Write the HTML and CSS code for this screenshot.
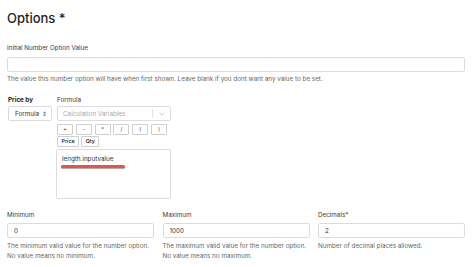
FILE: index.html
```html
<!DOCTYPE html>
<html lang="en">
<head>
    <meta charset="UTF-8">
    <meta name="viewport" content="width=device-width, initial-scale=1.0">
    <title>Options</title>
    <link rel="stylesheet" href="styles.css">
</head>
<body>
    <h2 class="title">Options *</h2>

    <div class="field">
        <label class="label">Initial Number Option Value</label>
        <input class="input" type="text" value="">
        <div class="help">The value this number option will have when first shown. Leave blank if you dont want any value to be set.</div>
    </div>

    <div class="price-row">
        <div class="price-by">
            <label class="label bold">Price by</label>
            <div class="select small">
                <span>Formula</span>
                <span class="updown">&#8661;</span>
            </div>
        </div>
        <div class="formula">
            <label class="label">Formula</label>
            <div class="select wide">
                <span class="placeholder">Calculation Variables</span>
                <span class="sep"></span>
                <svg class="chevron" viewBox="0 0 10 6" width="6" height="4">
                    <path d="M1 1l4 4 4-4" fill="none" stroke="#bbb" stroke-width="1.3"/>
                </svg>
            </div>
            <div class="ops">
                <button class="btn op">+</button>
                <button class="btn op">-</button>
                <button class="btn op">*</button>
                <button class="btn op">/</button>
                <button class="btn op">(</button>
                <button class="btn op">)</button>
            </div>
            <div class="vars">
                <button class="btn">Price</button>
                <button class="btn">Qty</button>
            </div>
            <div class="editor">
                <div class="code">length.inputvalue</div>
                <span class="mark"></span>
            </div>
        </div>
    </div>

    <div class="limits">
        <div class="field">
            <label class="label">Minimum</label>
            <input class="input" type="text" value="0">
            <div class="help">The minimum valid value for the number option.<br>No value means no minimum.</div>
        </div>
        <div class="field">
            <label class="label">Maximum</label>
            <input class="input" type="text" value="1000">
            <div class="help">The maximum valid value for the number option.<br>No value means no maximum.</div>
        </div>
        <div class="field">
            <label class="label">Decimals*</label>
            <input class="input" type="text" value="2">
            <div class="help">Number of decimal places allowed.</div>
        </div>
    </div>
</body>
</html>
```

FILE: styles.css
```css
* {
    margin: 0;
    padding: 0;
    box-sizing: border-box;
}

body {
    font-family: 'Inter', 'Liberation Sans', Arial, sans-serif;
    background: #fff;
    color: #333;
    padding: 0 9px 0 7px;
    width: 474px;
    height: 267px;
    overflow: hidden;
}

.title {
    font-size: 13px;
    font-weight: 500;
    line-height: 17px;
    margin-top: 10px;
    color: #1e1e1e;
}

.title + .field {
    margin-top: 16.5px;
}

.label {
    display: block;
    font-size: 6.3px;
    line-height: 9px;
    color: #3a3a3a;
}

.label.bold {
    font-weight: 700;
    color: #222;
}

.input {
    display: block;
    width: 100%;
    height: 15px;
    margin-top: 4.5px;
    border: 1px solid #dcdcdc;
    border-radius: 2px;
    padding: 0 6px;
    font-family: inherit;
    font-size: 6.3px;
    color: #333;
    outline: none;
}

.help {
    font-size: 6.3px;
    line-height: 9px;
    margin-top: 2.5px;
    color: #666;
}

.price-row {
    display: flex;
    gap: 5px;
    margin-top: 12px;
    padding-left: 1px;
}

.select {
    display: flex;
    align-items: center;
    height: 15px;
    margin-top: 1.5px;
    border: 1px solid #dcdcdc;
    border-radius: 2px;
    font-size: 6.3px;
    color: #333;
}

.select.small {
    width: 44px;
    padding: 0 4px 0 6px;
    justify-content: space-between;
}

.updown {
    font-size: 5.5px;
    color: #555;
}

.select.wide {
    width: 114px;
    padding-left: 5px;
}

.placeholder {
    color: #aaa;
    flex: 1;
}

.sep {
    width: 1px;
    height: 9px;
    background: #e2e2e2;
}

.chevron {
    margin: 0 5px 0 6px;
}

.ops {
    display: flex;
    gap: 2.8px;
    margin-top: 3px;
}

.btn {
    height: 11px;
    border: 1px solid #cfcfcf;
    border-radius: 1px;
    background: #fff;
    font-family: inherit;
    font-size: 5.3px;
    color: #333;
    padding: 0 3.5px;
    line-height: 9px;
}

.btn.op {
    width: 16px;
}

.vars {
    display: flex;
    gap: 2px;
    margin-top: 1px;
}

.vars .btn {
    font-weight: 600;
}

.editor {
    position: relative;
    width: 115px;
    height: 50px;
    margin-top: 2px;
    margin-left: -1px;
    border: 1px solid #dcdcdc;
    border-radius: 2px;
    padding: 5px 5px;
}

.code {
    font-size: 6.3px;
    line-height: 8px;
    color: #333;
}

.mark {
    position: absolute;
    left: 4px;
    top: 15px;
    width: 64px;
    height: 3px;
    border-radius: 2px;
    background: #e05550;
    box-shadow: 0 1px 1px rgba(0, 0, 0, 0.35);
}

.limits {
    display: grid;
    grid-template-columns: repeat(3, 1fr);
    gap: 8.5px;
    margin-top: 11.5px;
}

.limits .input {
    margin-top: 3.5px;
}

.limits .help {
    line-height: 10px;
    margin-top: 2.5px;
}
```
